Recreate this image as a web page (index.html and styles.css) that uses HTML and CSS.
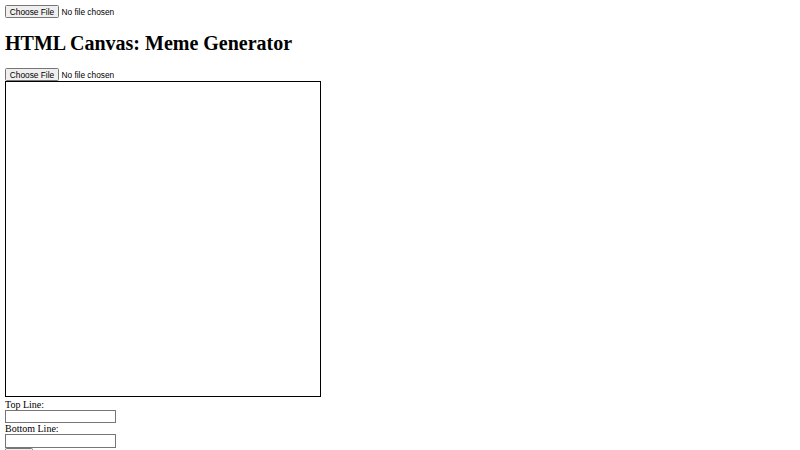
FILE: index.html
```html
<!DOCTYPE html>
<html>
<head>
<meta charset="utf-8">
<link rel="stylesheet" href="styles.css">
</head>
<body>
<input type="file">
<h1>HTML Canvas: Meme Generator</h1>
<input type="file"><br>
<canvas class="meme" width="502" height="502"></canvas><br>
Top Line:<br>
<input type="text" class="txt"><br>
Bottom Line:<br>
<input type="text" class="txt"><br>
<button class="go">Save</button>
</body>
</html>
```
FILE: styles.css
```css
html { zoom: 0.625; }
body { font-family: "Liberation Serif", serif; }
input[type=file] { font-family: "Liberation Sans", sans-serif; font-size: 13.33px; }
h1 { font-family: "Liberation Serif", serif; }
.meme { border: 2px solid #000; }
.txt { box-sizing: border-box; width: 178px; }
.go { font-family: "Liberation Sans", sans-serif; }
```
